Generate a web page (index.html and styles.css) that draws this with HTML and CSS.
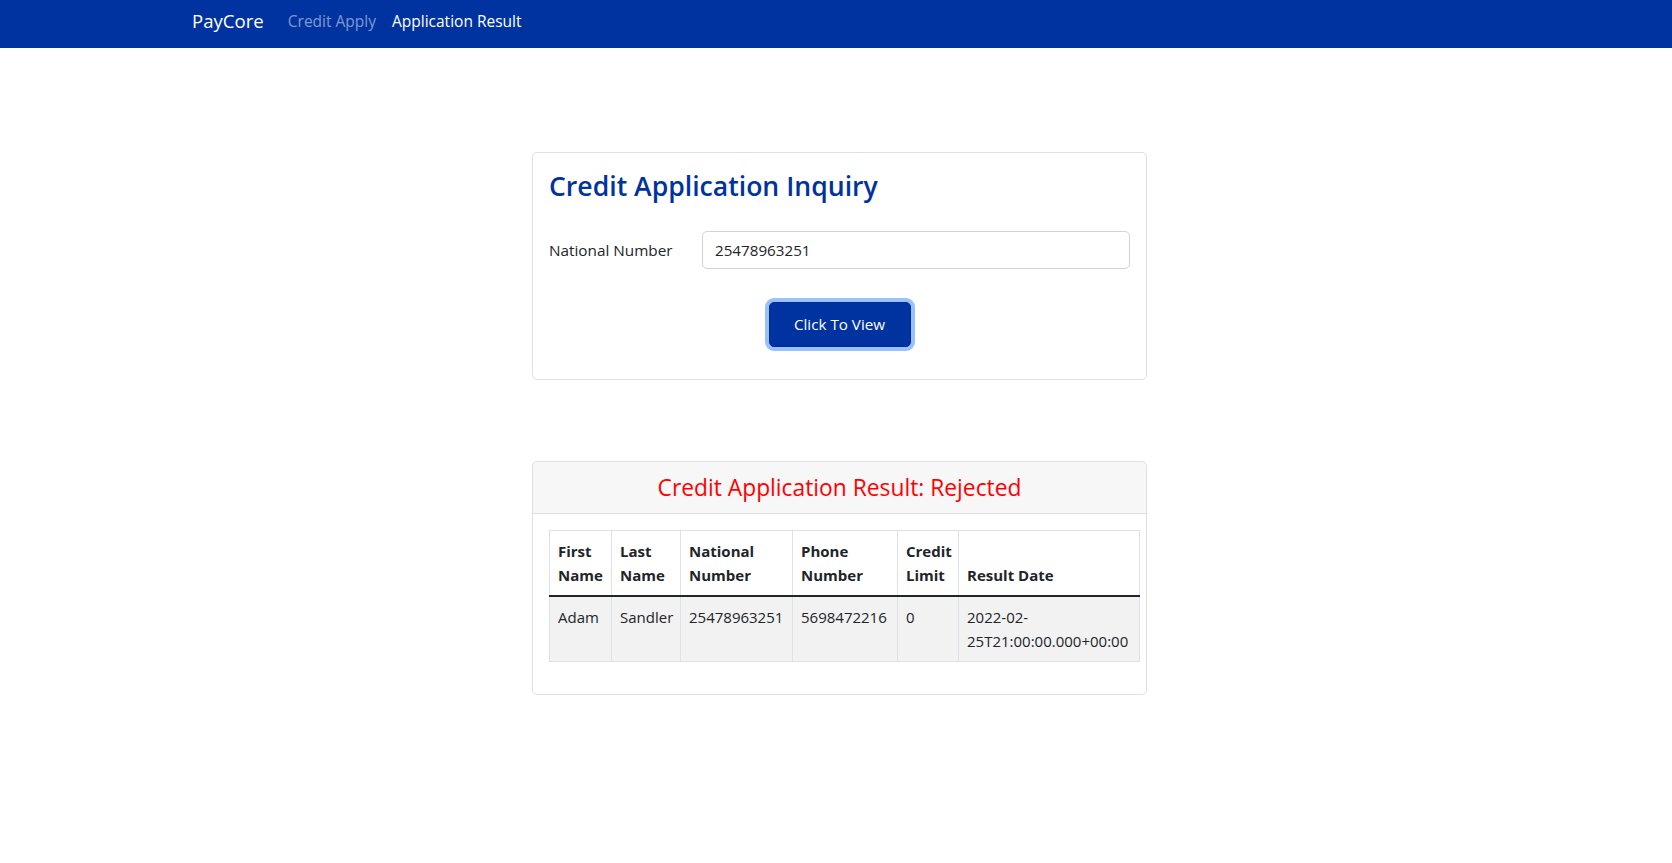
FILE: index.html
```html
<!DOCTYPE html>
<html lang="en">
<head>
<meta charset="utf-8">
<title>PayCore - Application Result</title>
<link rel="stylesheet" href="styles.css">
</head>
<body>
<nav class="navbar">
  <div class="nav-inner">
    <a class="brand" href="#">PayCore</a>
    <a class="nav-link" href="#">Credit Apply</a>
    <a class="nav-link active" href="#">Application Result</a>
  </div>
</nav>
<main class="main">
  <section class="card inquiry">
    <h3 class="title">Credit Application Inquiry</h3>
    <div class="form-row">
      <label class="label" for="nn">National Number</label>
      <input class="input" id="nn" type="text" value="25478963251">
    </div>
    <div class="actions">
      <button class="btn" type="button">Click To View</button>
    </div>
  </section>
  <section class="card result">
    <div class="card-header">
      <h4 class="result-title">Credit Application Result: Rejected</h4>
    </div>
    <div class="card-body">
      <table class="table">
        <colgroup>
          <col class="c1"><col class="c2"><col class="c3"><col class="c4"><col class="c5"><col class="c6">
        </colgroup>
        <thead>
          <tr>
            <th>First Name</th>
            <th>Last Name</th>
            <th>National Number</th>
            <th>Phone Number</th>
            <th>Credit Limit</th>
            <th>Result Date</th>
          </tr>
        </thead>
        <tbody>
          <tr>
            <td>Adam</td>
            <td>Sandler</td>
            <td>25478963251</td>
            <td>5698472216</td>
            <td>0</td>
            <td>2022-02-25T21:00:00.000+00:00</td>
          </tr>
        </tbody>
      </table>
    </div>
  </section>
</main>
</body>
</html>
```

FILE: styles.css
```css
* { box-sizing: border-box; }

body {
  margin: 0;
  font-family: "Open Sans", "Noto Sans", sans-serif;
  font-size: 15px;
  line-height: 24px;
  color: #212529;
  background: #fff;
}

.navbar {
  height: 48px;
  background: #0033a0;
}

.nav-inner {
  max-width: 1320px;
  margin: 0 auto;
  padding: 6px 16px 0;
  display: flex;
  align-items: flex-start;
}

.brand {
  font-size: 18.6px;
  line-height: 30px;
  color: #fff;
  text-decoration: none;
  margin-right: 16px;
}

.nav-link {
  font-size: 15.5px;
  line-height: 30px;
  padding: 0 8px;
  color: rgba(255, 255, 255, 0.5);
  text-decoration: none;
}

.nav-link.active { color: #fff; }

.main {
  padding-top: 104px;
}

.card {
  width: 615px;
  margin-left: calc(50% - 304px);
  border: 1px solid #dfdfdf;
  border-radius: 5px;
  background: #fff;
}

.inquiry { padding: 16px; }

.title {
  margin: 0;
  font-size: 26.6px;
  line-height: 35px;
  font-weight: 600;
  color: #0033a0;
}

.form-row {
  margin-top: 27px;
  display: flex;
  align-items: center;
  height: 38px;
}

.label {
  flex: 0 0 153px;
  font-size: 15.3px;
}

.input {
  flex: 1;
  height: 38px;
  border: 1px solid #ced4da;
  border-radius: 5px;
  padding: 0 12px;
  font-family: inherit;
  font-size: 15.2px;
  color: #212529;
  background: #fff;
}

.actions {
  margin-top: 33px;
  padding-bottom: 16px;
  display: flex;
  justify-content: center;
}

.btn {
  width: 142px;
  height: 45px;
  padding: 0 0 1px;
  background: #0033a0;
  border: 1px solid #002c8c;
  border-radius: 5px;
  color: #fff;
  font-family: inherit;
  font-size: 15.2px;
  box-shadow: 0 0 0 4px #98c1fe;
  cursor: pointer;
}

.result { margin-top: 81px; }

.card-header {
  height: 52px;
  background: #f7f7f7;
  border-bottom: 1px solid #dfdfdf;
  border-radius: 5px 5px 0 0;
  display: flex;
  align-items: center;
  justify-content: center;
}

.result-title {
  margin: 0;
  font-size: 22.8px;
  line-height: 28px;
  font-weight: 400;
  color: #ff0000;
}

.card-body { padding: 16px; }

.table {
  width: 590px;
  table-layout: fixed;
  border-collapse: collapse;
  border: 1px solid #dee2e6;
  margin-bottom: 16px;
}

.c1 { width: 62px; }
.c2 { width: 69px; }
.c3 { width: 112px; }
.c4 { width: 105px; }
.c5 { width: 61px; }
.c6 { width: 181px; }

.table th,
.table td {
  border: 1px solid #dee2e6;
  padding: 8px;
  text-align: left;
}

.table th {
  font-weight: 700;
  vertical-align: bottom;
  border-bottom: 2px solid #212529;
}

.table td {
  vertical-align: top;
  background: #f2f2f2;
}
```
